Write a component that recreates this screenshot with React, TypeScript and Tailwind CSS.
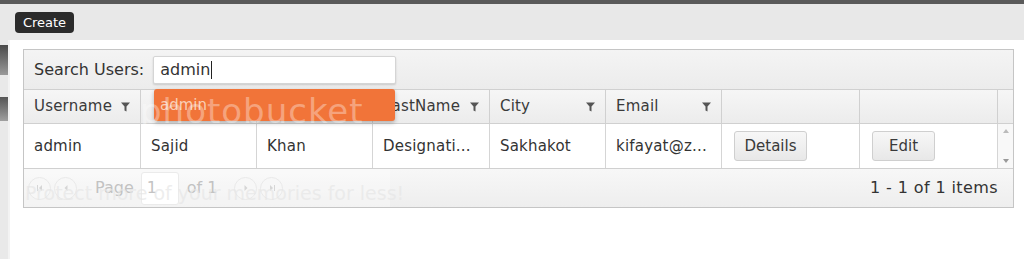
import React from "react";

const Funnel = () => (
  <svg width="9" height="10" viewBox="0 0 9 10" className="shrink-0">
    <path d="M0 0.5 H9 L5.5 4.5 V9.5 L3.5 8.5 V4.5 Z" fill="#555" />
  </svg>
);

const PagerBtn = ({ kind }: { kind: "first" | "prev" | "next" | "last" }) => (
  <div className="w-[23px] h-[23px] rounded-full border border-[#e0e0e0] bg-[#f4f4f4] flex items-center justify-center">
    <svg width="8" height="8" viewBox="0 0 8 8">
      {kind === "first" && (
        <>
          <rect x="1" y="1" width="1" height="6" fill="#c4c4c4" />
          <path d="M6 1 L3 4 L6 7 Z" fill="#c4c4c4" />
        </>
      )}
      {kind === "prev" && <path d="M5.5 1 L2.5 4 L5.5 7 Z" fill="#c4c4c4" />}
      {kind === "next" && <path d="M2.5 1 L5.5 4 L2.5 7 Z" fill="#c4c4c4" />}
      {kind === "last" && (
        <>
          <rect x="6" y="1" width="1" height="6" fill="#c4c4c4" />
          <path d="M2 1 L5 4 L2 7 Z" fill="#c4c4c4" />
        </>
      )}
    </svg>
  </div>
);

const widths = ["w-[117px]", "w-[116px]", "w-[116px]", "w-[117px]", "w-[116px]", "w-[116px]", "w-[138px]", "w-[138px]"];

export default function App() {
  const headers = ["Username", "", "", "LastName", "City", "Email", "", ""];
  const cells = ["admin", "Sajid", "Khan", "Designati...", "Sakhakot", "kifayat@z..."];
  return (
    <div
      className="w-[1024px] h-[259px] overflow-hidden bg-white relative"
      style={{ fontFamily: '"DejaVu Sans", Verdana, sans-serif' }}
    >
      <div className="h-[4px] bg-[#5a5a5a]" />
      <div className="h-[36px] bg-[#e8e8e8] pl-[15px] pt-[8px]">
        <button className="h-[21px] w-[59px] rounded-[4px] bg-[#2b2b2b] text-white text-[13px] leading-[21px] flex items-center justify-center">
          Create
        </button>
      </div>
      <div className="flex h-[219px]">
        <div className="w-[10px] bg-[#e9e9e9] border-r-2 border-[#f3f3f3] flex flex-col">
          <div className="h-[5px]" />
          <div className="h-[30px] bg-gradient-to-b from-[#4a4a4a] to-[#9a9a9a]" />
          <div className="h-[22px]" />
          <div className="h-[24px] bg-gradient-to-b from-[#555] to-[#a0a0a0]" />
        </div>
        <div className="pl-[13px] pt-[9px]">
          <div className="relative w-[991px] border border-[#c5c5c5] text-[15px] text-[#3a3a3a]">
            {/* toolbar */}
            <div className="h-[40px] border-b border-[#d0d0d0] bg-gradient-to-b from-[#f4f4f4] to-[#ececec] flex items-center pl-[10px]">
              <span className="text-[16px] text-[#333] mr-[9px]">Search Users:</span>
              <div className="w-[243px] h-[28px] bg-white border border-[#d5d5d5] rounded-[2px] shadow-[0_1px_2px_rgba(0,0,0,0.15)] flex items-center pl-[6px] text-[16px] text-[#333]">
                admin<span className="w-px h-[18px] bg-[#222] ml-[1px]" />
              </div>
            </div>
            {/* header */}
            <div className="flex h-[34px] border-b border-[#d0d0d0] bg-gradient-to-b from-[#f6f6f6] to-[#ececec]">
              {headers.map((h, i) => (
                <div
                  key={i}
                  className={`${widths[i]} border-r border-[#d0d0d0] flex items-center justify-between pl-[10px] pr-[10px] text-[#3a3a3a] tracking-[0.2px]`}
                >
                  <span>{h}</span>
                  {i < 6 && <Funnel />}
                </div>
              ))}
              <div className="flex-1" />
            </div>
            {/* data row */}
            <div className="flex h-[45px] border-b border-[#d0d0d0] bg-white">
              {cells.map((c, i) => (
                <div key={i} className={`${widths[i]} border-r border-[#d5d5d5] flex items-center pl-[10px] text-[#333] tracking-[0.2px]`}>
                  {c}
                </div>
              ))}
              <div className={`${widths[6]} border-r border-[#d5d5d5] flex items-center pl-[12px]`}>
                <button className="w-[73px] h-[30px] rounded-[3px] border border-[#cfcfcf] bg-gradient-to-b from-[#f7f7f7] to-[#e8e8e8] text-[#3a3a3a]">
                  Details
                </button>
              </div>
              <div className={`${widths[7]} border-r border-[#d5d5d5] flex items-center pl-[12px]`}>
                <button className="w-[63px] h-[30px] rounded-[3px] border border-[#cfcfcf] bg-gradient-to-b from-[#f7f7f7] to-[#e8e8e8] text-[#3a3a3a]">
                  Edit
                </button>
              </div>
              <div className="flex-1 bg-[#f8f8f8] flex flex-col items-center justify-between py-[5px]">
                <svg width="6" height="4" viewBox="0 0 6 4"><path d="M0 4 L3 0 L6 4 Z" fill="#bbb" /></svg>
                <svg width="6" height="4" viewBox="0 0 6 4"><path d="M0 0 L3 4 L6 0 Z" fill="#999" /></svg>
              </div>
            </div>
            {/* pager */}
            <div className="h-[38px] bg-gradient-to-b from-[#f7f7f7] to-[#eeeeee] flex items-center">
              <div className="flex items-center pl-[4px] gap-[3px]">
                <PagerBtn kind="first" />
                <PagerBtn kind="prev" />
              </div>
              <span className="ml-[18px] text-[16px] text-[#a8a8a8]">Page</span>
              <div className="ml-[7px] w-[38px] h-[33px] bg-white border border-[#e3e3e3] rounded-[3px] flex items-center pl-[5px] text-[16px] text-[#aaa]">
                1
              </div>
              <span className="ml-[8px] text-[16px] text-[#a8a8a8]">of 1</span>
              <div className="flex items-center ml-[17px] gap-[3px]">
                <PagerBtn kind="next" />
                <PagerBtn kind="last" />
              </div>
              <span className="ml-auto mr-[15px] text-[16px] tracking-[0.4px] text-[#333]">1 - 1 of 1 items</span>
            </div>

            {/* autocomplete dropdown */}
            <div className="absolute left-[130px] top-[39px] w-[241px] h-[32px] rounded-[3px] bg-[#f17439] shadow-[0_2px_4px_rgba(0,0,0,0.25)] flex items-center pl-[6px] text-[15px] text-[#f9cfb6]">
              admin
            </div>

            {/* watermark */}
            <div className="absolute left-[116px] top-[41px] text-[34px] leading-[40px] text-white/35 pointer-events-none tracking-[1px]">
              photobucket
            </div>
            <div className="absolute left-[0px] top-[119px] w-[366px] h-[38px] bg-white/30 pointer-events-none" />
            <div className="absolute left-[1px] top-[131px] text-[19px] leading-[24px] text-[#e6e6e6]/70 pointer-events-none whitespace-nowrap">
              Protect more of your memories for less!
            </div>
          </div>
        </div>
      </div>
    </div>
  );
}
